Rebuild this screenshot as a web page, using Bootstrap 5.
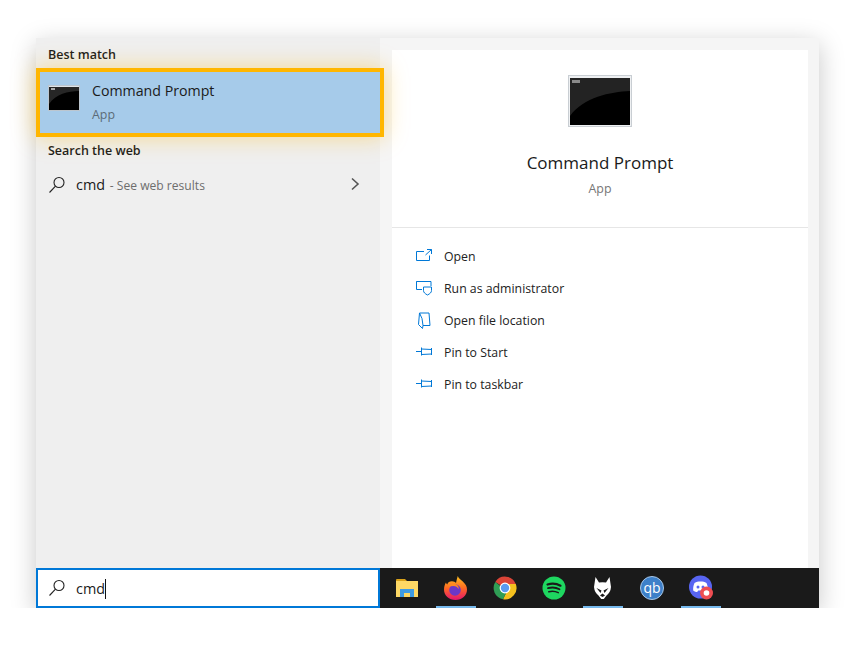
<!DOCTYPE html>
<html lang="en">
<head>
  <meta charset="UTF-8">
  <meta name="viewport" content="width=device-width, initial-scale=1.0">
  <title>Start search - cmd</title>
  <link href="https://cdn.jsdelivr.net/npm/bootstrap@5.3.3/dist/css/bootstrap.min.css" rel="stylesheet">
  <style>
    body { background: #fff; font-family: "Open Sans", "Noto Sans", sans-serif; color: #1a1a1a; overflow: hidden; }
    .start-win { width: 783px; height: 570px; margin: 38px 0 0 36px; box-shadow: 0 6px 24px rgba(0,0,0,.22); }
    .left-pane { width: 344px; background: #efefef; }
    .right-pane { width: 439px; background: #f5f5f5; }
    .group-label { font-size: 12.5px; font-weight: 600; line-height: 17px; padding-left: 12px; }
    .match-row { width: 348px; height: 69px; border: 4px solid #ffb600; background: #a6cbea; margin: 5px 0 5px; padding-left: 8px; box-shadow: 0 0 22px rgba(255,182,0,.4); position: relative; }
    .match-ico { flex: none; margin: -10px 12px 0 0; }
    .match-text { margin-top: -1px; }
    .match-name { font-size: 14.2px; line-height: 20px; color: #1b1b1b; }
    .match-kind { font-size: 12.4px; line-height: 18px; color: #5c6b78; margin-top: 5px; }
    .web-row { height: 36px; padding: 0 20px 0 12px; margin-top: 8px; font-size: 14.4px; }
    .web-hint { font-size: 12.1px; color: #6d6d6d; margin-left: 1px; }
    .web-arrow { margin-top: -2px; }
    .search-box { height: 40px; background: #fff; border: 2px solid #0078d7; padding-left: 10px; font-size: 14.4px; }
    .search-text { padding-top: 2px; }
    .caret-line { display: inline-block; width: 1px; height: 20px; background: #111; vertical-align: -5px; }
    .white-panel { height: 518px; margin: 12px 11px 0 12px; background: #fff; }
    .hero { height: 178px; border-bottom: 1px solid #e6e6e6; padding-top: 25px; }
    .hero-title { font-size: 17px; line-height: 24px; margin-top: 24px; }
    .hero-kind { font-size: 12.4px; line-height: 18px; color: #767676; margin-top: 5px; }
    .action-list { padding: 13px 0 0 23px; }
    .action-row { height: 32px; font-size: 12.3px; color: #222; gap: 11px; }
    .action-ico { width: 18px; height: 20px; flex: none; margin-top: -3px; }
    .task-strip { height: 40px; background: #1a1a1a; padding-left: 2px; }
    .task-slot { width: 49px; height: 40px; position: relative; }
    .task-slot.is-open::after { content: ""; position: absolute; left: 5px; right: 4px; bottom: 0; height: 2px; background: #76b9ed; }
  </style>
</head>
<body>
  <div class="start-win d-flex">
    <div class="left-pane d-flex flex-column">
      <div class="group-label" style="margin-top:8px">Best match</div>
      <div class="match-row d-flex align-items-center">
        <svg class="match-ico" width="32" height="26" viewBox="0 0 32 26">
          <rect x=".5" y=".5" width="31" height="25" fill="#dfe4e8" stroke="#bcc6cf"/>
          <rect x="1" y="2" width="30" height="23" fill="#000"/>
          <path d="M1 2h30v4C20 6 8 9 1 19z" fill="#262626"/>
          <rect x="3" y="3" width="4" height="2" fill="#aaa"/>
        </svg>
        <div class="match-text">
          <div class="match-name">Command Prompt</div>
          <div class="match-kind">App</div>
        </div>
      </div>
      <div class="group-label">Search the web</div>
      <div class="web-row d-flex align-items-center">
        <svg width="18" height="18" viewBox="0 0 18 18" fill="none" stroke="#222" stroke-width="1.1" style="margin-right:10px">
          <circle cx="11" cy="6.5" r="5"/><path d="M7.500 10.200 1.500 16.500"/>
        </svg>
        <span>cmd <span class="web-hint">- See web results</span></span>
        <svg class="ms-auto web-arrow" width="10" height="14" viewBox="0 0 10 14" fill="none" stroke="#555" stroke-width="1.6"><path d="M2 1.500 8 7l-6 5.500"/></svg>
      </div>
      <div class="search-box d-flex align-items-center mt-auto">
        <svg width="18" height="18" viewBox="0 0 18 18" fill="none" stroke="#222" stroke-width="1.1" style="margin-right:10px">
          <circle cx="11" cy="6.5" r="5"/><path d="M7.500 10.200 1.500 16.500"/>
        </svg>
        <span class="search-text">cmd<span class="caret-line"></span></span>
      </div>
    </div>
    <div class="right-pane d-flex flex-column">
      <div class="white-panel">
        <div class="hero text-center">
          <svg width="64" height="52" viewBox="0 0 64 52">
            <rect x=".5" y=".5" width="63" height="51" fill="#eef0f2" stroke="#c9ced3"/>
            <rect x="2" y="3" width="60" height="47" fill="#000"/>
            <path d="M2 3h60v13C42 17 16 22 2 41z" fill="#232323"/>
            <rect x="4" y="5" width="8" height="3" fill="#8a8a8a"/>
          </svg>
          <div class="hero-title">Command Prompt</div>
          <div class="hero-kind">App</div>
        </div>
        <div class="action-list">
          <div class="action-row d-flex align-items-center">
            <svg class="action-ico" viewBox="0 0 18 20" fill="none" stroke="#0078d7" stroke-width="1"><path d="M9 5.500H1.500v9h13V9.500M12 3.500h4.500V8M16.500 3.500 10.500 9"/></svg>
            <span>Open</span>
          </div>
          <div class="action-row d-flex align-items-center">
            <svg class="action-ico" viewBox="0 0 18 20" fill="none" stroke="#0078d7" stroke-width="1"><path d="M1.500 7V3.500H16V8M1.500 3.500V11.500H7M8.500 9h8v3.500c0 2-1.500 3.200-4 4.500-2.500-1.300-4-2.500-4-4.500z"/></svg>
            <span>Run as administrator</span>
          </div>
          <div class="action-row d-flex align-items-center">
            <svg class="action-ico" viewBox="0 0 18 20" fill="none" stroke="#0078d7" stroke-width="1"><path d="M4.500 3h9.500l1 12.500H8M4.500 3 3.500 14.500 7.500 18.500 8 15.500 7 8.500z"/></svg>
            <span>Open file location</span>
          </div>
          <div class="action-row d-flex align-items-center">
            <svg class="action-ico" viewBox="0 0 18 20" fill="none" stroke="#0078d7" stroke-width="1"><path d="M1 9.500h6M6.500 5.500v8M6.500 7l10 .5v4.500l-10 .5M16.500 6v7"/></svg>
            <span>Pin to Start</span>
          </div>
          <div class="action-row d-flex align-items-center">
            <svg class="action-ico" viewBox="0 0 18 20" fill="none" stroke="#0078d7" stroke-width="1"><path d="M1 9.500h6M6.500 5.500v8M6.500 7l10 .5v4.500l-10 .5M16.500 6v7"/></svg>
            <span>Pin to taskbar</span>
          </div>
        </div>
      </div>
      <div class="task-strip d-flex mt-auto">
        <div class="task-slot d-flex align-items-center justify-content-center">
          <svg width="22" height="18" viewBox="0 0 22 18">
            <path d="M0 1a1 1 0 0 1 1-1h8l2 2v2H0z" fill="#d9a21a"/>
            <rect y="2" width="22" height="16" fill="#fdd865"/>
            <path d="M4 18v-8h14v8h-4v-4H8v4z" fill="#3e9be3"/>
          </svg>
        </div>
        <div class="task-slot is-open d-flex align-items-center justify-content-center">
          <svg width="23" height="24" viewBox="0 0 23 24">
            <defs>
              <linearGradient id="fx" x1="0" y1="0" x2="0" y2="1"><stop offset="0" stop-color="#ffc21f"/><stop offset=".5" stop-color="#ff6a22"/><stop offset="1" stop-color="#e3146f"/></linearGradient>
            </defs>
            <path d="M11.500 24C5 24 0 19.500 0 13.500 0 10.500 1 8 2 6.500c.3 1 .6 1.500 1.200 2C4 6.500 5.500 5.300 8 5.300 10 5.300 11 6 12 7c.5-2.500 1-4.700 1.800-7 .7 2.300 2.500 3.200 5 5.500C21.500 8 23 10.500 23 13.500 23 19.500 18 24 11.500 24z" fill="url(#fx)"/>
            <circle cx="11" cy="14" r="5.800" fill="#6b37c7"/>
            <path d="M4.500 10.500C6 8 9 7 11.500 8c2.500 1 3.500 3 3 5-1-2-2.500-3-5-3-2 0-3.500.200-5 .500z" fill="#ff8a1f"/>
          </svg>
        </div>
        <div class="task-slot d-flex align-items-center justify-content-center">
          <svg width="24" height="24" viewBox="0 0 24 24">
            <path d="M12 12 2.300 6A11.500 11.500 0 0 1 22.800 8H12z" fill="#db4437"/>
            <path d="M22.800 8A11.500 11.500 0 0 1 10 23.300L14 15 12 8z" fill="#f4c01e"/>
            <path d="M2.300 6A11.500 11.500 0 0 0 10 23.300L14 15z" fill="#2f9e55"/>
            <circle cx="12" cy="12" r="5.400" fill="#fff"/>
            <circle cx="12" cy="12" r="4.200" fill="#5a9bf0"/>
          </svg>
        </div>
        <div class="task-slot d-flex align-items-center justify-content-center">
          <svg width="24" height="24" viewBox="0 0 24 24" fill="none" stroke="#1a1a1a" stroke-linecap="round">
            <circle cx="12" cy="12" r="11.500" fill="#1ed760" stroke="none"/>
            <path d="M5.500 8.500c4-1.200 9-1 13 1.200" stroke-width="2.200"/>
            <path d="M6 12.200c3.500-1 8-.8 11.500 1.100" stroke-width="1.800"/>
            <path d="M6.800 15.700c3-.8 6.500-.6 9.500 1" stroke-width="1.500"/>
          </svg>
        </div>
        <div class="task-slot is-open d-flex align-items-center justify-content-center">
          <svg width="17" height="22" viewBox="0 0 17 22">
            <path d="M1.500 0 5 5.500Q8.500 4.800 12 5.500L15.500 0 17 10Q16.500 15.500 12.500 18.500L9.800 22H7.200L4.500 18.500Q.5 15.500 0 10z" fill="#fff"/>
            <path d="M2.500 11 7.500 13.500 6.500 16zM14.500 11 9.500 13.500 10.500 16z" fill="#1a1a1a"/>
            <path d="M6 18.500 8.500 16.500 11 18.500 8.500 20z" fill="#1a1a1a"/>
          </svg>
        </div>
        <div class="task-slot d-flex align-items-center justify-content-center">
          <svg width="24" height="24" viewBox="0 0 24 24">
            <circle cx="12" cy="12" r="11.500" fill="#3d80c9" stroke="#a9c7e6"/>
            <text x="12" y="17" text-anchor="middle" font-family="Open Sans, sans-serif" font-size="14" fill="#fff">qb</text>
          </svg>
        </div>
        <div class="task-slot is-open d-flex align-items-center justify-content-center">
          <svg width="26" height="26" viewBox="0 0 26 26">
            <circle cx="12.500" cy="12" r="11.500" fill="#5865f2"/>
            <path d="M6.500 8c2-1.200 3.500-1.500 6-1.500S16.500 6.800 18.500 8c1.200 2.500 1.500 5 1.300 7.500-1.500 1-3 1.500-4 1.500l-1-1.500h-4.600l-1 1.500c-1 0-2.500-.5-4-1.500C5 13 5.300 10.500 6.500 8z" fill="#fff"/>
            <circle cx="10" cy="12" r="1.500" fill="#5865f2"/><circle cx="15" cy="12" r="1.500" fill="#5865f2"/>
            <circle cx="18.500" cy="18" r="6.500" fill="#ee4d52"/>
            <circle cx="18.500" cy="18" r="2.800" fill="#fff"/>
          </svg>
        </div>
      </div>
    </div>
  </div>
  <script src="https://cdn.jsdelivr.net/npm/bootstrap@5.3.3/dist/js/bootstrap.bundle.min.js"></script>
</body>
</html>
